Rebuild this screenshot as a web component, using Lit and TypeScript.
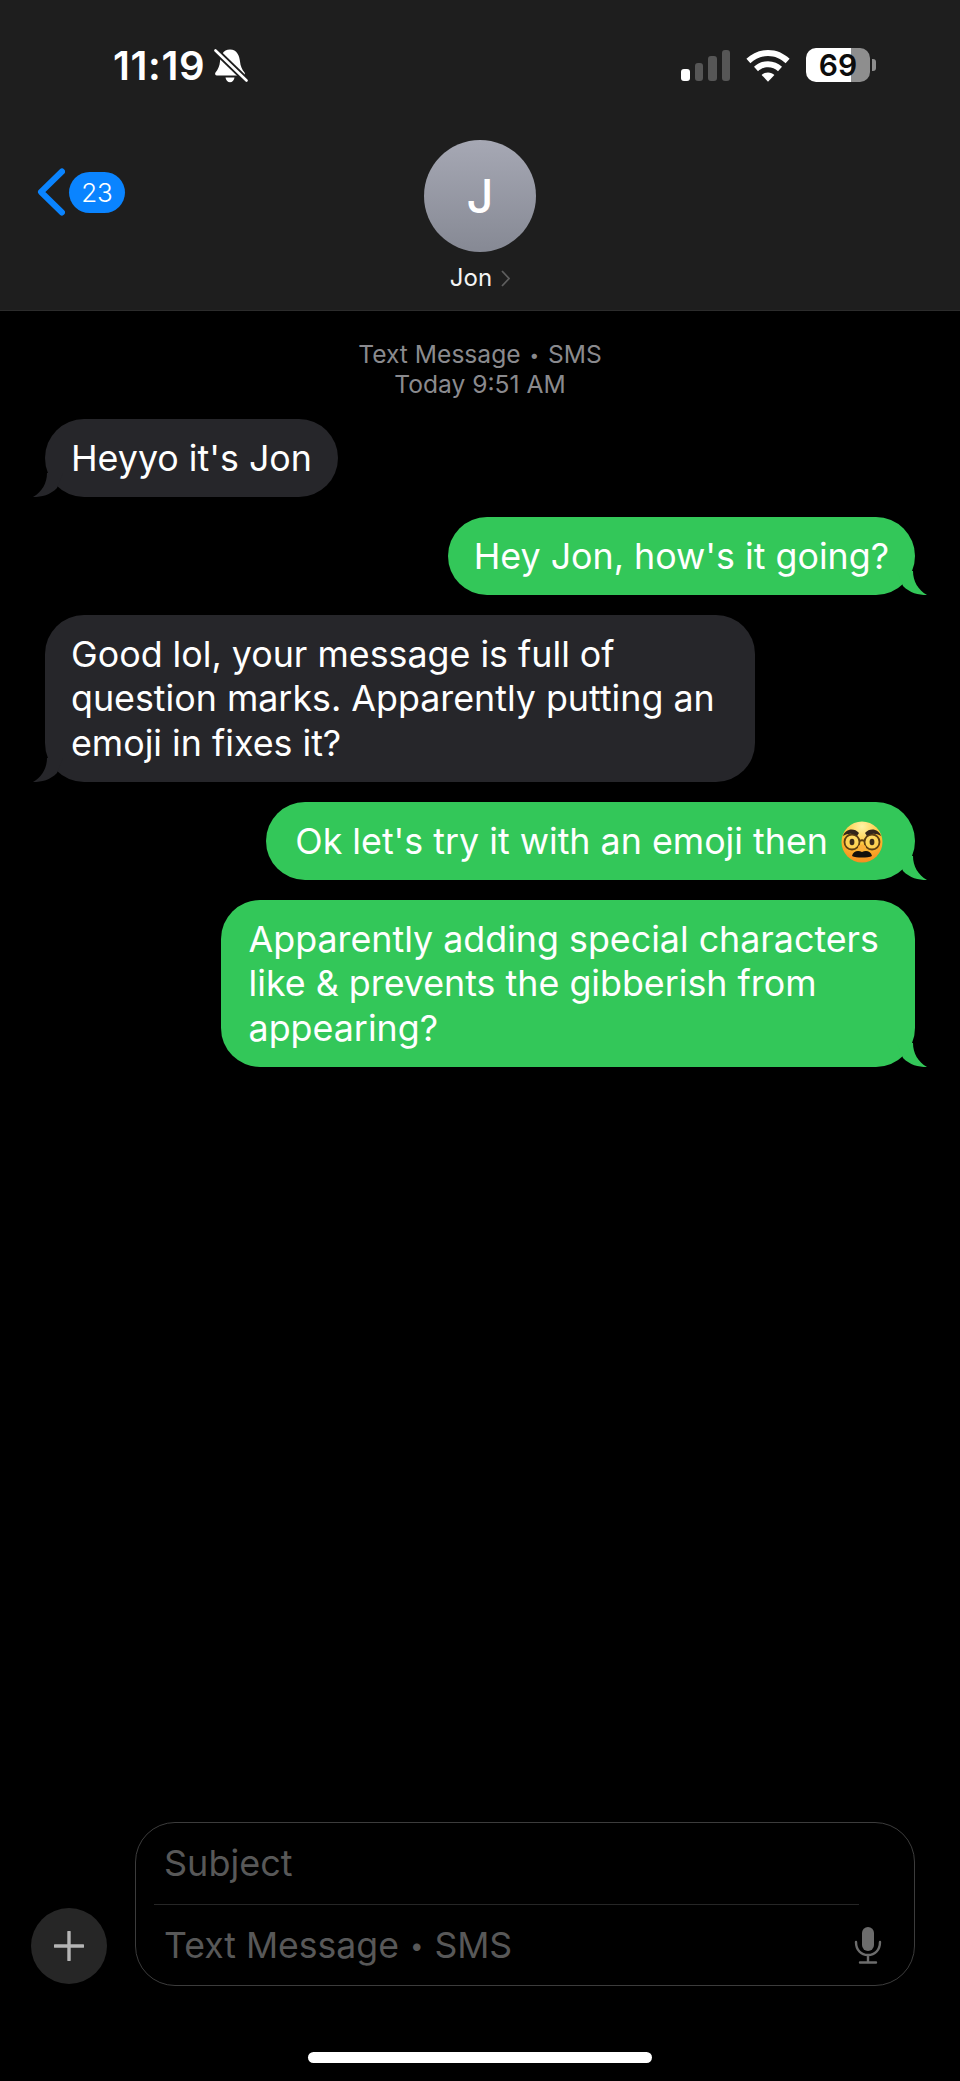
import { LitElement, html, css } from 'lit';
import { customElement } from 'lit/decorators.js';

const tailLeft = html`<svg class="tail tail-left" viewBox="0 0 30 24">
  <path d="M14 0 C14 10 9 19 0 24 C9 24 17 22 24 15 L30 0 Z" fill="currentColor"/>
</svg>`;
const tailRight = html`<svg class="tail tail-right" viewBox="0 0 30 24">
  <path d="M16 0 C16 10 21 19 30 24 C21 24 13 22 6 15 L0 0 Z" fill="currentColor"/>
</svg>`;

// disguise face, there is no colour emoji font here
const disguiseEmoji = html`<svg class="emoji" viewBox="0 0 42 42" role="img" aria-label="disguised face">
  <defs>
    <radialGradient id="face" cx="0.5" cy="0.12" r="0.95">
      <stop offset="0" stop-color="#fff3a6"/>
      <stop offset="0.5" stop-color="#fdc433"/>
      <stop offset="1" stop-color="#f6831c"/>
    </radialGradient>
  </defs>
  <circle cx="21" cy="21" r="20.5" fill="url(#face)"/>
  <circle cx="11" cy="21" r="7.5" fill="#ffe06a" fill-opacity="0.6" stroke="#5d3f12" stroke-width="1.8"/>
  <circle cx="31" cy="21" r="7.5" fill="#ffe06a" fill-opacity="0.6" stroke="#5d3f12" stroke-width="1.8"/>
  <path d="M2 15 C4 8 13 6 18 12 L16 15 C12 12 7 12 2 15 Z M40 15 C38 8 29 6 24 12 L26 15 C30 12 35 12 40 15 Z" fill="#33261b"/>
  <path d="M18.5 20 Q21 18.5 23.5 20" fill="none" stroke="#5d3f12" stroke-width="1.8"/>
  <ellipse cx="11" cy="21" rx="2.4" ry="3.2" fill="#3a2a1a"/>
  <ellipse cx="31" cy="21" rx="2.4" ry="3.2" fill="#3a2a1a"/>
  <ellipse cx="21" cy="27" rx="4" ry="3.6" fill="#fbb13a"/>
  <path d="M11 35 C12 30 17 29 21 31 C25 29 30 30 31 35 C27 37 15 37 11 35 Z" fill="#14100c"/>
</svg>`;

@customElement('app-root')
export class AppRoot extends LitElement {
  static styles = css`
    :host {
      display: flex;
      flex-direction: column;
      height: 2081px;
      background: #000;
      color: #fff;
      font-family: Inter, "Liberation Sans", sans-serif;
    }
    svg {
      display: block;
    }

    /* top bar */
    .top {
      height: 310px;
      flex: none;
      background: #1e1e1e;
      border-bottom: 1px solid #2c2c2c;
      position: relative;
    }
    .status {
      display: flex;
      justify-content: space-between;
      height: 47px;
      padding: 42px 84px 0 113px;
    }
    .status-left,
    .status-right {
      display: flex;
      align-items: center;
    }
    .time {
      font-size: 40px;
      font-weight: 600;
      letter-spacing: 0.6px;
      line-height: 40px;
    }
    .bell {
      width: 34px;
      height: 34px;
      margin-left: 9px;
    }
    .bars {
      display: flex;
      align-items: flex-end;
      gap: 5px;
      height: 31px;
      margin-left: 1px;
    }
    .bars i {
      width: 8.5px;
      border-radius: 3px;
      background: #565656;
    }
    .bars i:first-child {
      background: #fff;
    }
    .wifi {
      width: 44px;
      height: 32px;
      margin-left: 16px;
    }
    .battery {
      display: flex;
      align-items: center;
      margin: -2px 0 0 16px;
    }
    .cell {
      width: 64px;
      height: 34px;
      border-radius: 10px;
      overflow: hidden;
      background: linear-gradient(90deg, #fff 70%, #8e8e8e 70%);
      color: #0c0c0c;
      font-size: 30px;
      font-weight: 600;
      line-height: 34px;
      text-align: center;
    }
    .nub {
      width: 4px;
      height: 12px;
      margin-left: 2px;
      border-radius: 0 3px 3px 0;
      background: #8e8e8e;
    }
    .nav {
      display: flex;
      align-items: flex-start;
      padding: 51px 0 0 37px;
    }
    .back {
      display: flex;
      align-items: center;
      gap: 4px;
      margin-top: 28px;
      height: 48px;
    }
    .chevron {
      width: 28px;
      height: 48px;
    }
    .badge {
      width: 56px;
      height: 41px;
      border-radius: 21px;
      background: #0a84ff;
      font-size: 26px;
      line-height: 41px;
      text-align: center;
      font-weight: 300;
    }
    .contact {
      position: absolute;
      left: 0;
      right: 0;
      top: 140px;
      display: flex;
      flex-direction: column;
      align-items: center;
    }
    .avatar {
      width: 112px;
      height: 112px;
      border-radius: 50%;
      background: linear-gradient(#a6a8b4, #868994);
      font-size: 47px;
      font-weight: 500;
      line-height: 112px;
      text-align: center;
    }
    .name {
      display: flex;
      align-items: center;
      gap: 9px;
      margin-top: 11px;
      font-size: 24px;
      line-height: 30px;
      color: #f4f4f4;
    }
    .name svg {
      width: 9px;
      height: 17px;
    }

    /* conversation */
    .thread {
      flex: 1;
      display: flex;
      flex-direction: column;
      gap: 20px;
      padding: 29px 45px 0;
    }
    .stamp {
      font-size: 24.6px;
      line-height: 29.5px;
      text-align: center;
      color: #8a8a8e;
    }
    .stamp .dot {
      font-size: 17px;
      line-height: 0;
      vertical-align: 2px;
      margin: 0 2px;
    }
    .bubble {
      position: relative;
      width: fit-content;
      padding: 16.75px 26px;
      border-radius: 39px;
      font-size: 35.8px;
      line-height: 44.5px;
    }
    .in {
      background: #26262a;
      color: #fff;
      --tail: #26262a;
    }
    .out {
      align-self: flex-end;
      background: #33c759;
      --tail: #33c759;
    }
    .in.wide {
      padding-right: 40px;
    }
    .out.wide {
      padding-left: 28px;
      padding-right: 36px;
    }
    .with-emoji {
      padding-left: 29px;
      padding-right: 32px;
    }
    .tail {
      position: absolute;
      bottom: 0;
      width: 30px;
      height: 24px;
      color: var(--tail);
    }
    .tail-left {
      left: -12px;
    }
    .tail-right {
      right: -12px;
    }
    .emoji {
      display: inline-block;
      width: 42px;
      height: 42px;
      vertical-align: -9px;
      margin-left: 3px;
    }

    /* composer */
    .compose {
      flex: none;
      display: flex;
      align-items: flex-end;
      gap: 28px;
      padding: 0 45px 0 31px;
    }
    .plus {
      flex: none;
      width: 76px;
      height: 76px;
      margin-bottom: 2px;
      border-radius: 50%;
      background: #262626;
      display: flex;
      align-items: center;
      justify-content: center;
    }
    .plus svg {
      width: 30px;
      height: 30px;
    }
    .field {
      flex: 1;
      height: 162px;
      border: 1.5px solid #3c3c3c;
      border-radius: 40px;
      padding: 0 18px;
      color: #585858;
      font-size: 36px;
    }
    .subject {
      height: 81px;
      padding-left: 10px;
      line-height: 81px;
      border-bottom: 1px solid #262626;
      margin-right: 37px;
    }
    .body {
      display: flex;
      align-items: center;
      justify-content: space-between;
      height: 80px;
      padding-left: 10px;
      padding-right: 14px;
      font-size: 35.6px;
    }
    .body svg {
      width: 28px;
      height: 38px;
    }
    .body .dot {
      font-size: 24px;
      line-height: 0;
      vertical-align: 4px;
      margin: 0 1px;
    }
    .home {
      flex: none;
      width: 344px;
      height: 11px;
      margin: 66px auto 18px;
      border-radius: 6px;
      background: #fff;
    }
  `;

  render() {
    return html`
      <div class="top">
        <div class="status">
          <div class="status-left">
            <span class="time">11:19</span>
            <svg class="bell" viewBox="0 0 34 34">
              <path fill="#fff" d="M16 .5 C23 .5 25.5 7 26 12.5 C26.4 17 28 20.5 30.5 23.5 C31.4 24.8 30.8 26.5 29 26.5 H3 C1.2 26.5 .6 24.8 1.5 23.5 C4 20.5 5.6 17 6 12.5 C6.5 7 9 .5 16 .5 Z"/>
              <path fill="#fff" d="M11.5 28.5 H20.5 C20 31.6 18.2 33.2 16 33.2 C13.8 33.2 12 31.6 11.5 28.5 Z"/>
              <path d="M1.5 1.5 L32.5 31.5" stroke="#1e1e1e" stroke-width="6.5"/>
              <path d="M1.5 1.5 L32.5 31.5" stroke="#fff" stroke-width="2.6" stroke-linecap="round"/>
            </svg>
          </div>
          <div class="status-right">
            <div class="bars">
              <i style="height:12px"></i><i style="height:18px"></i><i style="height:25px"></i><i style="height:31px"></i>
            </div>
            <svg class="wifi" viewBox="0 0 44 32" fill="#fff">
              <path d="M22 0 C30.5 0 38 3.4 43.6 8.8 L39.6 13.2 C35 8.8 28.8 6 22 6 C15.2 6 9 8.8 4.4 13.2 L.4 8.8 C6 3.4 13.5 0 22 0 Z"/>
              <path d="M22 11.2 C27.6 11.2 32.4 13.4 36 16.8 L32 21.2 C29.4 18.8 25.8 17.2 22 17.2 C18.2 17.2 14.6 18.8 12 21.2 L8 16.8 C11.6 13.4 16.4 11.2 22 11.2 Z"/>
              <path d="M22 22.4 C24.6 22.4 26.8 23.4 28.4 24.9 L22 31.8 L15.6 24.9 C17.2 23.4 19.4 22.4 22 22.4 Z"/>
            </svg>
            <div class="battery">
              <div class="cell">69</div>
              <div class="nub"></div>
            </div>
          </div>
        </div>
        <div class="nav">
          <div class="back">
            <svg class="chevron" viewBox="0 0 28 48" fill="none" stroke="#0a84ff" stroke-width="6" stroke-linecap="round" stroke-linejoin="round">
              <path d="M25 3.5 L4 24 L25 44.5"/>
            </svg>
            <div class="badge">23</div>
          </div>
        </div>
        <div class="contact">
          <div class="avatar">J</div>
          <div class="name">
            Jon
            <svg viewBox="0 0 9 17" fill="none" stroke="#5e5e5e" stroke-width="1.8">
              <path d="M1 1 L8 8.5 L1 16"/>
            </svg>
          </div>
        </div>
      </div>

      <div class="thread">
        <div class="stamp">Text Message <span class="dot">•</span> SMS<br />Today 9:51 AM</div>
        <div class="bubble in">Heyyo it's Jon${tailLeft}</div>
        <div class="bubble out">Hey Jon, how's it going?${tailRight}</div>
        <div class="bubble in wide">
          Good lol, your message is full of<br />question marks. Apparently putting an<br />emoji in fixes it?${tailLeft}
        </div>
        <div class="bubble out with-emoji">Ok let's try it with an emoji then ${disguiseEmoji}${tailRight}</div>
        <div class="bubble out wide">
          Apparently adding special characters<br />like &amp; prevents the gibberish from<br />appearing?${tailRight}
        </div>
      </div>

      <div class="compose">
        <div class="plus">
          <svg viewBox="0 0 30 30" stroke="#b5b5b5" stroke-width="3.4" stroke-linecap="round">
            <path d="M15 1 V29 M1 15 H29"/>
          </svg>
        </div>
        <div class="field">
          <div class="subject">Subject</div>
          <div class="body">
            <span>Text Message <span class="dot">•</span> SMS</span>
            <svg viewBox="0 0 28 38" fill="none" stroke="#6c6c6c" stroke-width="2.4" stroke-linecap="round">
              <rect x="8" y="1" width="12" height="24" rx="6" fill="#6c6c6c" stroke="none"/>
              <path d="M2 16 C2 24 7 29 14 29 C21 29 26 24 26 16 M14 29 V36 M6 36.5 H22"/>
            </svg>
          </div>
        </div>
      </div>
      <div class="home"></div>
    `;
  }
}
